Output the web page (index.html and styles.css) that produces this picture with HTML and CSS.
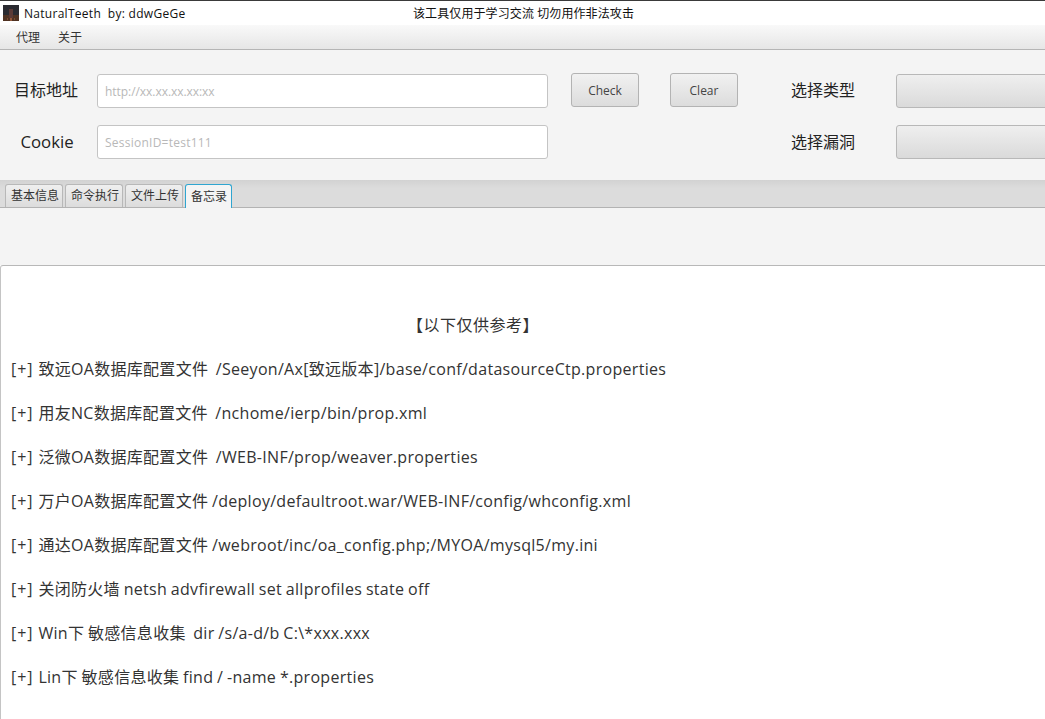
FILE: index.html
```html
<!DOCTYPE html>
<html lang="zh">
<head>
<meta charset="utf-8">
<title>NaturalTeeth</title>
<link rel="stylesheet" href="styles.css">
</head>
<body>
<header class="titlebar">
  <svg class="logo" width="16" height="16" viewBox="0 0 16 16">
    <rect width="16" height="16" fill="#2a2a30"/>
    <rect y="10" width="16" height="6" fill="#4f3222"/>
    <rect x="6" y="4" width="4" height="9" fill="#5c3a36"/>
    <rect x="7" y="13" width="2" height="3" fill="#94583a"/>
    <rect x="4" y="13" width="1" height="2" fill="#7c4a30"/>
    <rect x="11" y="13" width="1" height="2" fill="#7c4a30"/>
  </svg>
  <span class="app-name">NaturalTeeth&nbsp; by: ddwGeGe</span>
  <span class="notice">该工具仅用于学习交流 切勿用作非法攻击</span>
</header>
<nav class="menubar">
  <span class="menu-item">代理</span>
  <span class="menu-item">关于</span>
</nav>
<section class="form">
  <div class="form-row">
    <label class="label">目标地址</label>
    <div class="input placeholder">http://xx.xx.xx.xx:xx</div>
    <button class="btn btn-check">Check</button>
    <button class="btn btn-clear">Clear</button>
    <label class="label label-select">选择类型</label>
    <div class="select"></div>
  </div>
  <div class="form-row form-row-two">
    <label class="label label-cookie">Cookie</label>
    <div class="input placeholder placeholder-cookie">SessionID=test111</div>
    <label class="label label-select label-wide">选择漏洞</label>
    <div class="select"></div>
  </div>
</section>
<div class="tabs">
  <span class="tab">基本信息</span>
  <span class="tab">命令执行</span>
  <span class="tab">文件上传</span>
  <span class="tab tab-active">备忘录</span>
</div>
<div class="toolbar"></div>
<main class="notes">
  <p class="note note-title">【以下仅供参考】</p>
  <p class="note"><span class="mark">[+] </span>致远OA数据库配置文件  /Seeyon/Ax[致远版本]/base/conf/datasourceCtp.properties</p>
  <p class="note"><span class="mark">[+] </span>用友NC数据库配置文件  /nchome/ierp/bin/prop.xml</p>
  <p class="note"><span class="mark">[+] </span>泛微OA数据库配置文件  /WEB-INF/prop/weaver.properties</p>
  <p class="note"><span class="mark">[+] </span>万户OA数据库配置文件 /deploy/defaultroot.war/WEB-INF/config/whconfig.xml</p>
  <p class="note"><span class="mark">[+] </span>通达OA数据库配置文件 /webroot/inc/oa_config.php;/MYOA/mysql5/my.ini</p>
  <p class="note"><span class="mark">[+] </span>关闭防火墙 netsh advfirewall set allprofiles state off</p>
  <p class="note"><span class="mark">[+] </span>Win下 敏感信息收集  dir /s/a-d/b C:\*xxx.xxx</p>
  <p class="note"><span class="mark">[+] </span>Lin下 敏感信息收集 find / -name *.properties</p>
</main>
</body>
</html>
```
FILE: styles.css
```css
* { box-sizing: border-box; }
html, body { margin: 0; height: 100%; overflow: hidden; }
body {
  width: 1045px;
  height: 719px;
  background: #fff;
  color: #333;
  font-family: "Open Sans", "Noto Sans CJK SC", sans-serif;
  font-size: 13px;
}
.titlebar {
  height: 25px;
  border-top: 1px solid #3a3a3a;
  background: #fff;
  display: flex;
  align-items: center;
  padding-left: 3px;
  color: #111;
  font-size: 12px;
}
.logo { flex: none; }
.app-name { margin-left: 5px; width: 389px; white-space: nowrap; letter-spacing: .28px; }
.notice { white-space: nowrap; letter-spacing: .1px; }
.menubar {
  height: 25px;
  display: flex;
  align-items: center;
  padding-left: 16px;
  gap: 18px;
  background: linear-gradient(#f9f9f9, #e6e6e6);
  border-bottom: 1px solid #b5b5b5;
  font-size: 12px;
  color: #333;
}
.form {
  height: 130px;
  background: #f4f4f4;
  padding: 23px 0 0 14px;
  overflow: hidden;
}
.form-row { display: flex; align-items: center; height: 35px; white-space: nowrap; }
.form-row-two { margin-top: 16px; }
.label { width: 64px; flex: none; text-align: center; font-size: 16px; line-height: 20px; margin-top: -2px; color: #222; }
.form-row-two .label { margin-top: 0; }
.label-cookie { font-size: 16.8px; padding-left: 2px; }
.input {
  width: 451px;
  height: 34px;
  flex: none;
  margin-left: 19px;
  background: #fff;
  border: 1px solid #c4c4c4;
  border-radius: 3px;
  padding: 1px 0 0 7px;
  line-height: 32px;
}
.placeholder { color: #b8b8b8; font-size: 12px; letter-spacing: -.05px; }
.placeholder-cookie { letter-spacing: .24px; }
.btn {
  width: 68px;
  height: 34px;
  flex: none;
  margin-top: -2px;
  border: 1px solid #b3b3b3;
  border-radius: 3px;
  background: linear-gradient(#f1f1f1, #dcdcdc);
  color: #444;
  font-family: inherit;
  font-size: 12px;
  padding: 2px 0 0;
}
.btn-check { margin-left: 23px; }
.btn-clear { margin-left: 31px; }
.label-select { margin-left: 53px; }
.label-wide { margin-left: 243px; }
.select {
  width: 200px;
  height: 34px;
  flex: none;
  margin-left: 41px;
  border: 1px solid #b8b8b8;
  border-radius: 3px;
  background: linear-gradient(#efefef, #dadada);
}
.tabs {
  height: 28px;
  background: linear-gradient(#d2d2d2, #dcdcdc 30%);
  border-bottom: 1px solid #b3b3b3;
  display: flex;
  align-items: flex-end;
  padding-left: 5px;
  gap: 2px;
  font-size: 12px;
}
.tab {
  height: 23px;
  padding: 0 3px 0 5px;
  line-height: 22px;
  border: 1px solid #b8b8b8;
  border-bottom: 0;
  border-radius: 3px 3px 0 0;
  background: linear-gradient(#efefef, #dcdcdc);
  color: #333;
}
.tab-active {
  height: 24px;
  margin-bottom: -1px;
  padding: 0 4px 0 5px;
  background: #f4f4f4;
  border-color: #2fa5d0;
  line-height: 23px;
}
.toolbar { height: 57px; background: #f4f4f4; }
.notes {
  height: 454px;
  background: #fff;
  border-top: 1px solid #b8b8b8;
  border-left: 1px solid #c4c4c4;
  border-radius: 3px 0 0 0;
  padding: 38px 0 0 10px;
  font-size: 16px;
  color: #333;
}
.note { margin: 0; height: 44px; line-height: 46px; white-space: pre; letter-spacing: .3px; word-spacing: -.7px; }
.mark { letter-spacing: .9px; word-spacing: 0; }
.note-title { text-align: center; width: 924px; height: 42px; line-height: 42px; letter-spacing: .5px; }
```
